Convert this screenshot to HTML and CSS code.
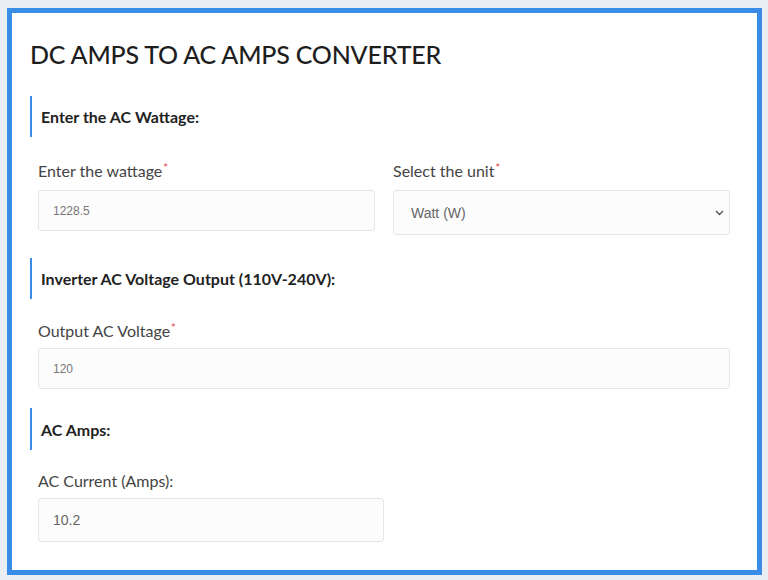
FILE: index.html
```html
<!DOCTYPE html>
<html lang="en">
<head>
<meta charset="utf-8">
<title>DC Amps to AC Amps Converter</title>
<link rel="stylesheet" href="styles.css">
</head>
<body>
<div class="card">
  <h1 class="title">DC AMPS TO AC AMPS CONVERTER</h1>

  <div class="section-head">Enter the AC Wattage:</div>
  <div class="fields two">
    <div class="field">
      <label class="label">Enter the wattage<span class="req">*</span></label>
      <input class="input small" type="text" value="1228.5">
    </div>
    <div class="field">
      <label class="label">Select the unit<span class="req">*</span></label>
      <div class="select-wrap">
        <select class="select">
          <option>Watt (W)</option>
        </select>
        <svg class="chev" width="9" height="6" viewBox="0 0 9 6"><path d="M1 1l3.5 3.5L8 1" fill="none" stroke="#555" stroke-width="1.4"/></svg>
      </div>
    </div>
  </div>

  <div class="section-head s2">Inverter AC Voltage Output (110V-240V):</div>
  <div class="fields one">
    <div class="field">
      <label class="label">Output AC Voltage<span class="req">*</span></label>
      <input class="input small" type="text" value="120">
    </div>
  </div>

  <div class="section-head s3">AC Amps:</div>
  <div class="fields half">
    <div class="field">
      <label class="label">AC Current (Amps):</label>
      <input class="input result" type="text" value="10.2">
    </div>
  </div>
</div>
</body>
</html>
```

FILE: styles.css
```css
* { box-sizing: border-box; }
html, body { margin: 0; padding: 0; }
body {
  background: #e8eef4;
  width: 768px;
  height: 580px;
  overflow: hidden;
  font-family: Lato, "Liberation Sans", sans-serif;
}
.card {
  margin: 8px 0 0 7px;
  width: 755px;
  height: 567px;
  border: 5px solid #3a8de6;
  background: #fff;
  padding: 25px 27px 0 18px;
}
.title {
  margin: 0 0 26px 0;
  font-size: 25px;
  line-height: 32px;
  font-weight: 500;
  color: #1e1e1e;
  letter-spacing: -0.2px;
}
.section-head {
  height: 41px;
  border-left: 2px solid #3a8de6;
  padding-left: 9px;
  display: flex;
  align-items: center;
  font-size: 16px;
  font-weight: 700;
  color: #222;
}
.section-head.s2 { margin-top: 23px; }
.section-head.s3 { margin-top: 19px; height: 42px; }
.fields {
  margin-left: 8px;
  display: grid;
  gap: 18px;
}
.fields.two { grid-template-columns: 337px 337px; margin-top: 22px; }
.fields.one { grid-template-columns: 692px; margin-top: 20px; }
.fields.half { grid-template-columns: 346px; margin-top: 19px; }
.field { display: flex; flex-direction: column; }
.label {
  font-size: 16px;
  line-height: 24px;
  height: 24px;
  color: #444;
  margin-bottom: 5px;
}
.fields.two .label { margin-bottom: 7px; }
.req {
  color: #e53b3b;
  font-size: 11px;
  line-height: 0;
  position: relative;
  top: -5px;
  margin-left: 1px;
}
.input {
  height: 41px;
  border: 1px solid #e6e6e6;
  border-radius: 3px;
  background: #fcfcfc;
  padding: 0 14px;
  font-family: "Liberation Sans", Arial, sans-serif;
  color: #777;
  outline: none;
}
.input.small { font-size: 12px; }
.input.result { height: 44px; font-size: 14px; color: #666; }
.select-wrap { position: relative; }
.select {
  width: 100%;
  height: 45px;
  border: 1px solid #e6e6e6;
  border-radius: 3px;
  background: #fcfcfc;
  padding: 0 17px;
  font-family: "Liberation Sans", Arial, sans-serif;
  font-size: 14px;
  color: #666;
  appearance: none;
  -webkit-appearance: none;
  outline: none;
}
.chev {
  position: absolute;
  right: 6px;
  top: 20px;
}
```
